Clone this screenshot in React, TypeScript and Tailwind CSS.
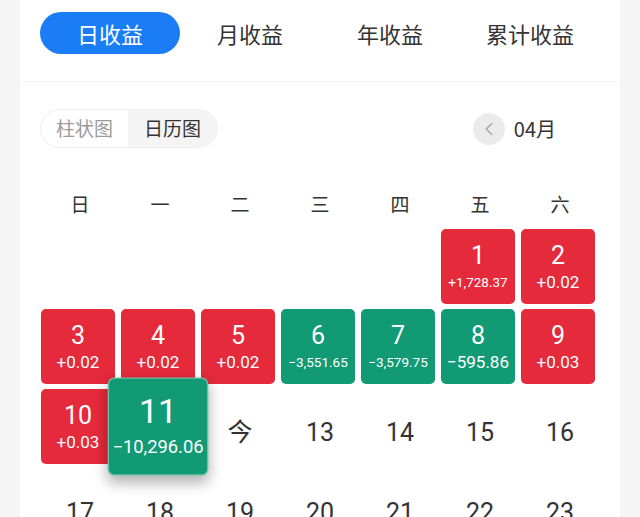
import { ChevronLeft } from "lucide-react";

const tabs = ["日收益", "月收益", "年收益", "累计收益"];
const weekdays = ["日", "一", "二", "三", "四", "五", "六"];

type Day = {
  day: string;
  value?: string;
  up?: boolean;
  small?: boolean;
  selected?: boolean;
};

const days: (Day | null)[] = [
  null,
  null,
  null,
  null,
  null,
  { day: "1", value: "+1,728.37", up: true, small: true },
  { day: "2", value: "+0.02", up: true },
  { day: "3", value: "+0.02", up: true },
  { day: "4", value: "+0.02", up: true },
  { day: "5", value: "+0.02", up: true },
  { day: "6", value: "−3,551.65", up: false, small: true },
  { day: "7", value: "−3,579.75", up: false, small: true },
  { day: "8", value: "−595.86", up: false },
  { day: "9", value: "+0.03", up: true },
  { day: "10", value: "+0.03", up: true },
  { day: "11", value: "−10,296.06", up: false, small: true, selected: true },
  { day: "今" },
  { day: "13" },
  { day: "14" },
  { day: "15" },
  { day: "16" },
  { day: "17" },
  { day: "18" },
  { day: "19" },
  { day: "20" },
  { day: "21" },
  { day: "22" },
  { day: "23" },
];

const numFont = "font-['Roboto','Noto_Sans_CJK_SC',sans-serif]";

function DayCell({ d }: { d: Day | null }) {
  if (!d) return <div />;
  if (!d.value) {
    return (
      <div
        className={`flex h-[75px] items-center justify-center pt-3 text-[25px] text-[#333] ${numFont}`}
      >
        {d.day}
      </div>
    );
  }
  const bg = d.up ? "bg-[#e52a3b]" : "bg-[#129a74]";
  return (
    <div
      className={`ml-px mr-[5px] flex h-[75px] flex-col items-center justify-center rounded-[5px] text-white ${bg} ${numFont} ${
        d.selected
          ? "relative z-10 scale-x-[1.36] scale-y-[1.31] border border-[#6cc1a6] shadow-[0_5px_10px_rgba(0,0,0,0.3)]"
          : ""
      }`}
    >
      <span className="text-[25px] leading-[30px]">{d.day}</span>
      <span
        className={
          d.small ? "text-[13.5px] leading-[22px]" : "text-[17px] leading-[22px]"
        }
      >
        {d.value}
      </span>
    </div>
  );
}

export default function App() {
  return (
    <div className="min-h-[517px] bg-[#f5f5f5] font-['Noto_Sans_CJK_SC',sans-serif]">
      <div className="mx-5 min-h-[517px] bg-white">
        <div className="grid h-[82px] grid-cols-4 border-b border-[#f3f3f3] px-5 pt-3">
          {tabs.map((t, i) => (
            <div key={t} className="flex justify-center">
              <div
                className={`flex h-[42px] items-center justify-center text-[22px] ${
                  i === 0
                    ? "w-full rounded-full bg-[#1a7df5] text-white"
                    : "text-[#333]"
                }`}
              >
                {t}
              </div>
            </div>
          ))}
        </div>

        <div className="px-5 pt-[27px]">
          <div className="flex items-center justify-between">
            <div className="flex h-[39px] overflow-hidden rounded-full border border-[#efefef] text-[19px]">
              <div className="flex w-[87px] items-center justify-center text-[#9a9a9a]">
                柱状图
              </div>
              <div className="flex w-[89px] items-center justify-center bg-[#f4f4f4] text-[#333]">
                日历图
              </div>
            </div>
            <div className="flex items-center gap-[9px]">
              <div className="flex h-8 w-8 items-center justify-center rounded-full bg-[#ebebeb]">
                <ChevronLeft size={22} strokeWidth={1.5} color="#a3a3a3" />
              </div>
              <span className="text-[20px] text-[#333]">04月</span>
              <div className="invisible h-8 w-[35px]" />
            </div>
          </div>

          <div className="mt-[36px] grid h-10 grid-cols-7">
            {weekdays.map((w) => (
              <div
                key={w}
                className="flex items-center justify-center text-[19px] text-[#333]"
              >
                {w}
              </div>
            ))}
          </div>

          <div className="mt-[5px] grid grid-cols-7 gap-y-[5px]">
            {days.map((d, i) => (
              <DayCell key={i} d={d} />
            ))}
          </div>
        </div>
      </div>
    </div>
  );
}
